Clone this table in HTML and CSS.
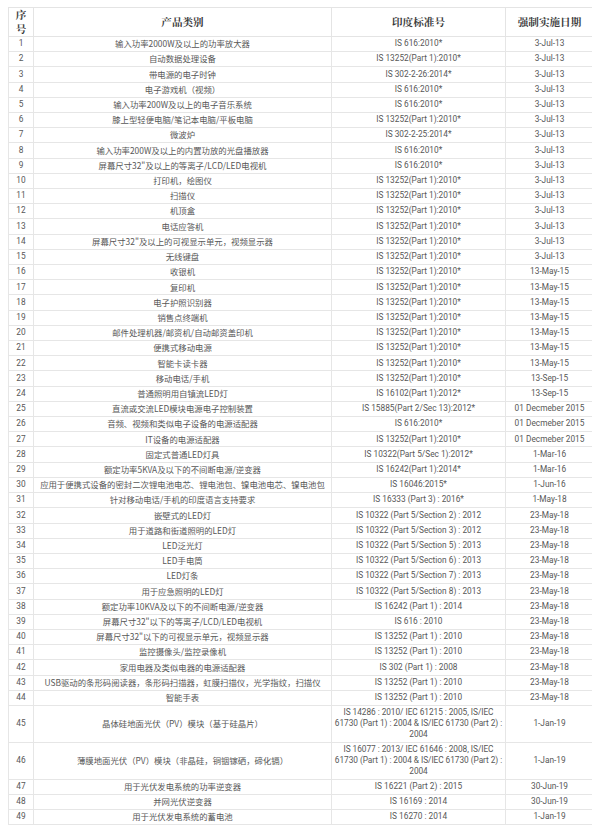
FILE: index.html
```html
<!DOCTYPE html>
<html lang="zh">
<head>
<meta charset="utf-8">
<link rel="stylesheet" href="styles.css">
</head>
<body>
<table class="std">
<colgroup><col class="c-no"><col class="c-prod"><col class="c-is"><col class="c-date"></colgroup>
<thead>
<tr><th>序号</th><th>产品类别</th><th>印度标准号</th><th>强制实施日期</th></tr>
</thead>
<tbody>
<tr><td>1</td><td class="p">输入功率2000W及以上的功率放大器</td><td>IS 616:2010*</td><td>3-Jul-13</td></tr>
<tr><td>2</td><td class="p">自动数据处理设备</td><td>IS 13252(Part 1):2010*</td><td>3-Jul-13</td></tr>
<tr><td>3</td><td class="p">带电源的电子时钟</td><td>IS 302-2-26:2014*</td><td>3-Jul-13</td></tr>
<tr><td>4</td><td class="p">电子游戏机（视频）</td><td>IS 616:2010*</td><td>3-Jul-13</td></tr>
<tr><td>5</td><td class="p">输入功率200W及以上的电子音乐系统</td><td>IS 616:2010*</td><td>3-Jul-13</td></tr>
<tr><td>6</td><td class="p">膝上型轻便电脑/笔记本电脑/平板电脑</td><td>IS 13252(Part 1):2010*</td><td>3-Jul-13</td></tr>
<tr><td>7</td><td class="p">微波炉</td><td>IS 302-2-25:2014*</td><td>3-Jul-13</td></tr>
<tr><td>8</td><td class="p">输入功率200W及以上的内置功放的光盘播放器</td><td>IS 616:2010*</td><td>3-Jul-13</td></tr>
<tr><td>9</td><td class="p">屏幕尺寸32"及以上的等离子/LCD/LED电视机</td><td>IS 616:2010*</td><td>3-Jul-13</td></tr>
<tr><td>10</td><td class="p">打印机，绘图仪</td><td>IS 13252(Part 1):2010*</td><td>3-Jul-13</td></tr>
<tr><td>11</td><td class="p">扫描仪</td><td>IS 13252(Part 1):2010*</td><td>3-Jul-13</td></tr>
<tr><td>12</td><td class="p">机顶盒</td><td>IS 13252(Part 1):2010*</td><td>3-Jul-13</td></tr>
<tr><td>13</td><td class="p">电话应答机</td><td>IS 13252(Part 1):2010*</td><td>3-Jul-13</td></tr>
<tr><td>14</td><td class="p">屏幕尺寸32"及以上的可视显示单元，视频显示器</td><td>IS 13252(Part 1):2010*</td><td>3-Jul-13</td></tr>
<tr><td>15</td><td class="p">无线键盘</td><td>IS 13252(Part 1):2010*</td><td>3-Jul-13</td></tr>
<tr><td>16</td><td class="p">收银机</td><td>IS 13252(Part 1):2010*</td><td>13-May-15</td></tr>
<tr><td>17</td><td class="p">复印机</td><td>IS 13252(Part 1):2010*</td><td>13-May-15</td></tr>
<tr><td>18</td><td class="p">电子护照识别器</td><td>IS 13252(Part 1):2010*</td><td>13-May-15</td></tr>
<tr><td>19</td><td class="p">销售点终端机</td><td>IS 13252(Part 1):2010*</td><td>13-May-15</td></tr>
<tr><td>20</td><td class="p">邮件处理机器/邮资机/自动邮资盖印机</td><td>IS 13252(Part 1):2010*</td><td>13-May-15</td></tr>
<tr><td>21</td><td class="p">便携式移动电源</td><td>IS 13252(Part 1):2010*</td><td>13-May-15</td></tr>
<tr><td>22</td><td class="p">智能卡读卡器</td><td>IS 13252(Part 1):2010*</td><td>13-May-15</td></tr>
<tr><td>23</td><td class="p">移动电话/手机</td><td>IS 13252(Part 1):2010*</td><td>13-Sep-15</td></tr>
<tr><td>24</td><td class="p">普通照明用自镇流LED灯</td><td>IS 16102(Part 1):2012*</td><td>13-Sep-15</td></tr>
<tr><td>25</td><td class="p">直流或交流LED模块电源电子控制装置</td><td>IS 15885(Part 2/Sec 13):2012*</td><td>01 Decmeber 2015</td></tr>
<tr><td>26</td><td class="p">音频、视频和类似电子设备的电源适配器</td><td>IS 616:2010*</td><td>01 Decmeber 2015</td></tr>
<tr><td>27</td><td class="p">IT设备的电源适配器</td><td>IS 13252(Part 1):2010*</td><td>01 Decmeber 2015</td></tr>
<tr><td>28</td><td class="p">固定式普通LED灯具</td><td>IS 10322(Part 5/Sec 1):2012*</td><td>1-Mar-16</td></tr>
<tr><td>29</td><td class="p">额定功率5KVA及以下的不间断电源/逆变器</td><td>IS 16242(Part 1):2014*</td><td>1-Mar-16</td></tr>
<tr><td>30</td><td class="p">应用于便携式设备的密封二次锂电池电芯、锂电池包、镍电池电芯、镍电池包</td><td>IS 16046:2015*</td><td>1-Jun-16</td></tr>
<tr><td>31</td><td class="p">针对移动电话/手机的印度语言支持要求</td><td>IS 16333 (Part 3) : 2016*</td><td>1-May-18</td></tr>
<tr><td>32</td><td class="p">嵌壁式的LED灯</td><td>IS 10322 (Part 5/Section 2) : 2012</td><td>23-May-18</td></tr>
<tr><td>33</td><td class="p">用于道路和街道照明的LED灯</td><td>IS 10322 (Part 5/Section 3) : 2012</td><td>23-May-18</td></tr>
<tr><td>34</td><td class="p">LED泛光灯</td><td>IS 10322 (Part 5/Section 5) : 2013</td><td>23-May-18</td></tr>
<tr><td>35</td><td class="p">LED手电筒</td><td>IS 10322 (Part 5/Section 6) : 2013</td><td>23-May-18</td></tr>
<tr><td>36</td><td class="p">LED灯条</td><td>IS 10322 (Part 5/Section 7) : 2013</td><td>23-May-18</td></tr>
<tr><td>37</td><td class="p">用于应急照明的LED灯</td><td>IS 10322 (Part 5/Section 8) : 2013</td><td>23-May-18</td></tr>
<tr><td>38</td><td class="p">额定功率10KVA及以下的不间断电源/逆变器</td><td>IS 16242 (Part 1) : 2014</td><td>23-May-18</td></tr>
<tr><td>39</td><td class="p">屏幕尺寸32"以下的等离子/LCD/LED电视机</td><td>IS 616 : 2010</td><td>23-May-18</td></tr>
<tr><td>40</td><td class="p">屏幕尺寸32"以下的可视显示单元，视频显示器</td><td>IS 13252 (Part 1) : 2010</td><td>23-May-18</td></tr>
<tr><td>41</td><td class="p">监控摄像头/监控录像机</td><td>IS 13252 (Part 1) : 2010</td><td>23-May-18</td></tr>
<tr><td>42</td><td class="p">家用电器及类似电器的电源适配器</td><td>IS 302 (Part 1) : 2008</td><td>23-May-18</td></tr>
<tr><td>43</td><td class="p">USB驱动的条形码阅读器，条形码扫描器，虹膜扫描仪，光学指纹，扫描仪</td><td>IS 13252 (Part 1) : 2010</td><td>23-May-18</td></tr>
<tr><td>44</td><td class="p">智能手表</td><td>IS 13252 (Part 1) : 2010</td><td>23-May-18</td></tr>
<tr><td>45</td><td class="p">晶体硅地面光伏（PV）模块（基于硅晶片）</td><td class="multi">IS 14286 : 2010/ IEC 61215 : 2005, IS/IEC<br>61730 (Part 1) : 2004 &amp; IS/IEC 61730 (Part 2) :<br>2004</td><td>1-Jan-19</td></tr>
<tr><td>46</td><td class="p">薄膜地面光伏（PV）模块（非晶硅，铜铟镓硒，碲化镉）</td><td class="multi">IS 16077 : 2013/ IEC 61646 : 2008, IS/IEC<br>61730 (Part 1) : 2004 &amp; IS/IEC 61730 (Part 2) :<br>2004</td><td>1-Jan-19</td></tr>
<tr><td>47</td><td class="p">用于光伏发电系统的功率逆变器</td><td>IS 16221 (Part 2) : 2015</td><td>30-Jun-19</td></tr>
<tr><td>48</td><td class="p">并网光伏逆变器</td><td>IS 16169 : 2014</td><td>30-Jun-19</td></tr>
<tr><td>49</td><td class="p">用于光伏发电系统的蓄电池</td><td>IS 16270 : 2014</td><td>1-Jan-19</td></tr>
</tbody>
</table>
</body>
</html>
```
FILE: styles.css
```css
html, body {
  background: #ffffff;
}
body {
  margin: 7px 8px;
}
.std {
  border-collapse: collapse;
  table-layout: fixed;
  width: 585px;
  font-family: Roboto, "Noto Sans CJK SC", sans-serif;
  font-size: 8.3px;
  color: #575757;
}
.c-no { width: 25px; }
.c-prod { width: 298px; }
.c-is { width: 174px; }
.c-date { width: 88px; }
.std th {
  font-family: "Noto Serif CJK SC", "Noto Sans CJK SC", serif;
  font-weight: 700;
  font-size: 10.6px;
  line-height: 14px;
  color: #3a3a3a;
  border: 1px solid #e4e4e4;
  padding: 0 2px;
  text-align: center;
  vertical-align: middle;
}
.std td {
  border: 1px solid #e6e6e6;
  padding: 1.25px 2px;
  line-height: 11.7px;
  text-align: center;
  vertical-align: middle;
  white-space: nowrap;
}
.std td.p {
  font-size: 8.4px;
  font-family: "Noto Sans CJK SC", sans-serif;
}
.std td.multi {
  line-height: 11.1px;
  letter-spacing: -0.05px;
}
```
